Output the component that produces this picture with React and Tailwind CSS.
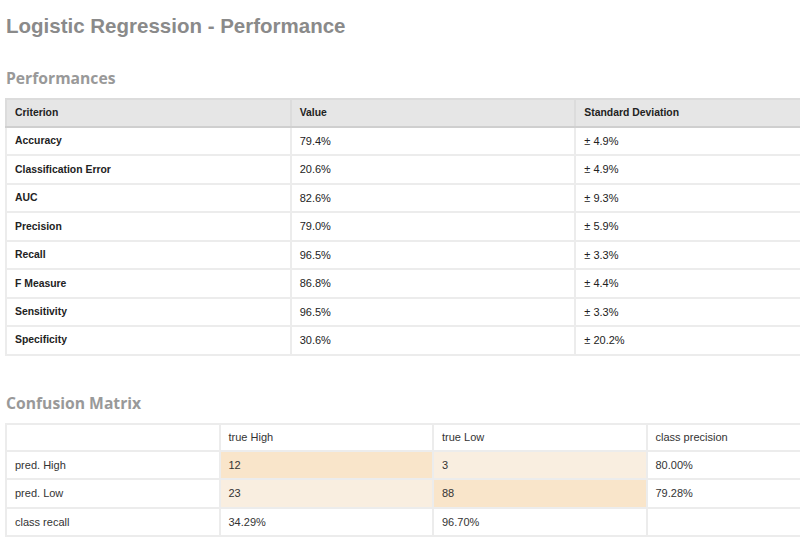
const performances = [
  ['Accuracy', '79.4%', '± 4.9%'],
  ['Classification Error', '20.6%', '± 4.9%'],
  ['AUC', '82.6%', '± 9.3%'],
  ['Precision', '79.0%', '± 5.9%'],
  ['Recall', '96.5%', '± 3.3%'],
  ['F Measure', '86.8%', '± 4.4%'],
  ['Sensitivity', '96.5%', '± 3.3%'],
  ['Specificity', '30.6%', '± 20.2%'],
];

const strong = 'bg-[#f9e5ca]';
const weak = 'bg-[#f9eee0]';

const matrix = [
  { label: 'pred. High', cells: [['12', strong], ['3', weak], ['80.00%', '']] },
  { label: 'pred. Low', cells: [['23', weak], ['88', strong], ['79.28%', '']] },
  { label: 'class recall', cells: [['34.29%', ''], ['96.70%', ''], ['', '']] },
];

export default function App() {
  return (
    <div className="w-[800px] h-[542px] overflow-hidden bg-white font-['Liberation_Sans',Arial,sans-serif] text-[11px] text-[#222]">
      <div className="w-[860px] pl-[5px] pt-[14px]">
        <h1 className="pl-[1px] text-[20.5px] leading-[24px] font-bold text-[#8a8a8a]">
          Logistic Regression - Performance
        </h1>

        <h2 className="mt-[30px] pl-[1px] font-['Open_Sans',sans-serif] text-[15.7px] leading-[20px] font-bold text-[#999]">
          Performances
        </h2>

        {/* Performance table */}
        <table className="mt-[10px] w-[856px] table-fixed border-collapse">
          <thead>
            <tr className="h-[28px] bg-[#e6e6e6] text-left text-[10.4px] font-bold">
              <th className="border-2 border-[#dcdcdc] border-b-[#cfcfcf] pl-[8px]">Criterion</th>
              <th className="border-2 border-[#dcdcdc] border-b-[#cfcfcf] pl-[8px]">Value</th>
              <th className="border-2 border-[#dcdcdc] border-b-[#cfcfcf] pl-[8px]">Standard Deviation</th>
            </tr>
          </thead>
          <tbody>
            {performances.map(([name, value, dev]) => (
              <tr key={name} className="h-[28.45px]">
                <td className="border-2 border-[#ececec] pl-[8px] text-[10.4px] font-bold">{name}</td>
                <td className="border-2 border-[#ececec] pl-[8px]">{value}</td>
                <td className="border-2 border-[#ececec] pl-[8px]">{dev}</td>
              </tr>
            ))}
          </tbody>
        </table>

        <h2 className="mt-[37px] pl-[1px] font-['Open_Sans',sans-serif] text-[15.7px] leading-[20px] font-bold text-[#999]">
          Confusion Matrix
        </h2>

        {/* Confusion matrix */}
        <table className="mt-[10px] w-[856px] table-fixed border-collapse text-[#333]">
          <tbody>
            <tr className="h-[27px]">
              <td className="border-2 border-[#ececec]"></td>
              <td className="border-2 border-[#ececec] pl-[8px]">true High</td>
              <td className="border-2 border-[#ececec] pl-[8px]">true Low</td>
              <td className="border-2 border-[#ececec] pl-[8px]">class precision</td>
            </tr>
            {matrix.map((row) => (
              <tr key={row.label} className="h-[28.5px]">
                <td className="border-2 border-[#ececec] pl-[8px]">{row.label}</td>
                {row.cells.map(([v, bg], i) => (
                  <td key={i} className={`border-2 border-[#ececec] pl-[8px] ${bg}`}>
                    {v}
                  </td>
                ))}
              </tr>
            ))}
          </tbody>
        </table>
      </div>
    </div>
  );
}
